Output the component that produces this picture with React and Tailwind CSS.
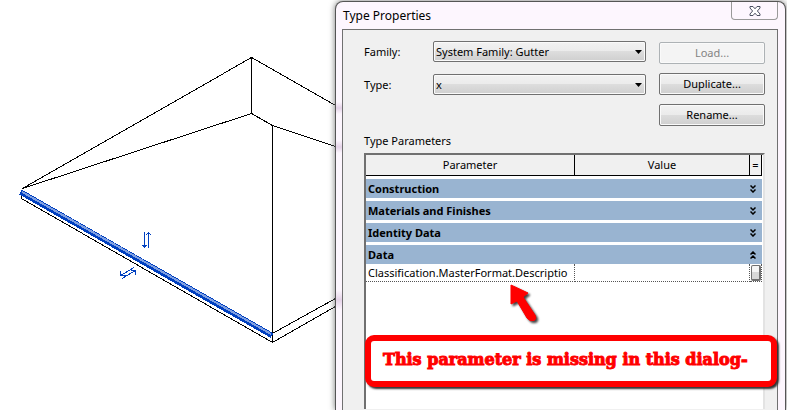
const sections = [
  { name: 'Construction', open: false },
  { name: 'Materials and Finishes', open: false },
  { name: 'Identity Data', open: false },
  { name: 'Data', open: true },
];

const RoofView = () => (
  <svg
    width="335"
    height="410"
    viewBox="0 0 335 410"
    className="shrink-0"
    fill="none"
    stroke="#000"
    shapeRendering="crispEdges"
    aria-hidden="true"
  >
    <path d="M22.5 188.5 251.5 57.5 335.5 105.5M22.5 188.5 251.5 113.5 272.5 125.5 335.5 146.5M251.5 57.5V113.5M272.5 125.5V342.5" />
    <path d="M335.5 298.5 272.5 333.5M335.5 306.5 272.5 342.5 21.5 198.5V189.5" />
    <path d="M20.5 192 272 335.5" stroke="#0040c0" strokeWidth="5.4" />
    <path d="M22 191.8 271 334" stroke="#7f9fe0" strokeWidth="2" />
    <g stroke="#0040c0">
      <path d="M144.5 232V247M142.5 245 144.5 247.5 146.5 245M148.5 248V232M146 235 148.5 232.5 151.5 235.5" />
      <path d="M134 267.5 120.5 275.5M120.5 271V275.5H125.5M122 278.5 135.5 270.5M130.5 270.5H135.5V275" />
    </g>
  </svg>
);

const Combo = ({ id, label, value }) => (
  <div className="flex h-[21px] items-center">
    <label htmlFor={id} className="w-[69px] shrink-0">{label}</label>
    <div className="relative flex-1">
      <select
        id={id}
        defaultValue={value}
        className="block h-[21px] w-full appearance-none rounded-xs border border-[#707070] bg-[linear-gradient(#f2f2f2,#ebebeb_50%,#dddddd_50%,#cfcfcf)] pl-0.5 text-black shadow-[inset_0_0_0_1px_#fafafa]"
      >
        <option>{value}</option>
      </select>
      <svg width="7" height="4" viewBox="0 0 7 4" className="pointer-events-none absolute top-[9px] right-1" aria-hidden="true">
        <path d="M0 0H7L3.5 4Z" />
      </svg>
    </div>
  </div>
);

const PushButton = ({ children, disabled }) => (
  <button
    type="button"
    disabled={disabled}
    className="h-[22px] w-full rounded-xs border border-[#707070] bg-[linear-gradient(#f2f2f2,#ebebeb_50%,#dddddd_50%,#cfcfcf)] text-black shadow-[inset_0_0_0_1px_#fafafa] disabled:border-[#adb2b5] disabled:bg-none disabled:bg-[#f4f4f4] disabled:text-[#838383]"
  >
    {children}
  </button>
);

const Chevrons = ({ open }) => (
  <svg
    width="6"
    height="8"
    viewBox="0 0 6 8"
    className={open ? 'mr-1.5' : 'mr-1.5 rotate-180'}
    fill="none"
    stroke="#000"
    strokeWidth="1.5"
    aria-hidden="true"
  >
    <path d="M.5 3.5 3 1 5.5 3.5M.5 7.5 3 5 5.5 7.5" />
  </svg>
);

const ParameterTable = () => (
  <table className="w-full table-fixed border-separate border-spacing-0">
    <colgroup>
      <col />
      <col className="w-[175px]" />
      <col className="w-[12px]" />
    </colgroup>
    <thead>
      <tr className="h-[21px] bg-[#f0f0f0]">
        <th className="border-r border-b border-black p-0 font-normal">Parameter</th>
        <th className="border-r border-b border-black p-0 font-normal">Value</th>
        <th className="border-r border-b border-black p-0 font-normal">=</th>
      </tr>
    </thead>
    <tbody>
      {sections.map((section) => (
        <tr key={section.name} className="h-[22px]">
          <td colSpan={3} className="border-t-3 border-white bg-[#99b4d1] p-0 pl-0.5">
            <button type="button" aria-expanded={section.open} className="flex w-full items-center justify-between font-bold">
              {section.name}
              <Chevrons open={section.open} />
            </button>
          </td>
        </tr>
      ))}
      <tr className="h-[18px]">
        <td className="overflow-hidden border-r border-b border-dotted border-[#555] p-0 pl-0.5 whitespace-nowrap">
          Classification.MasterFormat.Descriptio
        </td>
        <td className="border-r border-b border-dotted border-[#555] p-0" />
        <td className="border-r border-b border-dotted border-[#555] p-0">
          <button
            type="button"
            aria-label="Associate parameter"
            className="ml-px block h-4 w-[10px] rounded-xs border border-r-2 border-b-2 border-[#707070] bg-[linear-gradient(#f5f5f5_50%,#d8d8d8_50%)]"
          />
        </td>
      </tr>
    </tbody>
  </table>
);

const Callout = () => (
  <>
    <svg width="34" height="44" viewBox="0 0 34 44" className="absolute top-[128px] left-[143px] drop-shadow-[2px_2px_1px_#444]" aria-hidden="true">
      <path
        d="M2 2 19 10 14 14 26 32Q28 36 25 37.5 21 39 18 35L8 18 2 21Z"
        fill="#f00"
        stroke="#f00"
        strokeLinejoin="round"
      />
    </svg>
    <div className="absolute top-[180px] -right-3.5 -left-px flex h-[52px] items-center rounded-[9px] border-6 border-[#f00] bg-white px-3 pb-0.5 shadow-[2px_2px_2px_#333]">
      <p className="font-['DejaVu_Serif',serif] text-[16px] font-bold whitespace-nowrap text-[#f00] [-webkit-text-stroke:1px_#f00]">
        This parameter is missing in this dialog-
      </p>
    </div>
  </>
);

export default function App() {
  return (
    <div className="flex min-h-screen overflow-hidden bg-white font-['Noto_Sans',sans-serif] text-[11px] leading-4 text-black">
      <RoofView />
      <section
        aria-labelledby="dialog-title"
        className="mt-px mr-px flex min-w-[450px] flex-1 flex-col rounded-t-lg border border-b-0 border-[#555] bg-[#fdf6fe] bg-[linear-gradient(#fdf6fe_100px,#e5d3e8_106px,#fdf6fe_112px,#fdf6fe_138px,#e5d3e8_145px,#fdf6fe_151px,#fdf6fe_288px,#e5d3e8_298px,#fdf6fe_308px)] bg-[length:6px_100%] bg-no-repeat pr-[7px] pl-1.5 shadow-[0_0_6px_#777]"
      >
        <header className="flex h-[27px] items-start justify-between">
          <h1 id="dialog-title" className="pt-1 pl-px text-[12px] leading-5">Type Properties</h1>
          <button
            type="button"
            aria-label="Close"
            className="flex h-[18px] w-[47px] items-center justify-center rounded-b-sm border border-t-0 border-[#999]"
          >
            <svg width="12" height="10" viewBox="0 0 12 10" aria-hidden="true">
              <path
                d="M1 .5H4L6 2.8 8 .5H11V2L8.4 5 11 8V9.5H8L6 7.2 4 9.5H1V8L3.6 5 1 2Z"
                fill="#fff"
                stroke="#4a4f60"
              />
            </svg>
          </button>
        </header>
        <div className="flex-1 border border-b-0 border-[#707070] bg-[#f0f0f0] pt-[11px] pr-3 pl-[21px]">
          <div className="flex gap-[13px]">
            <div className="flex flex-1 flex-col gap-3">
              <Combo id="family" label="Family:" value="System Family: Gutter" />
              <Combo id="type" label="Type:" value="x" />
            </div>
            <div className="flex w-[106px] flex-col gap-[9px] pt-px">
              <PushButton disabled>Load...</PushButton>
              <PushButton>Duplicate...</PushButton>
              <PushButton>Rename...</PushButton>
            </div>
          </div>
          <h2 className="mt-[7px] mb-1">Type Parameters</h2>
          <div className="relative min-h-[256px] border-t-2 border-r-2 border-l-2 border-t-[#707070] border-r-[#e3e3e3] border-l-[#707070] bg-white pr-px">
            <ParameterTable />
            <Callout />
          </div>
        </div>
      </section>
    </div>
  );
}
